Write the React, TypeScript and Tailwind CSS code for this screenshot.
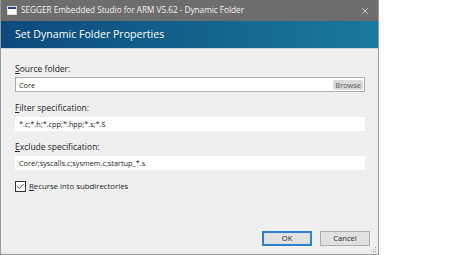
import { Check, X } from 'lucide-react';

function Field({ ul, rest, value, browse }: { ul: string; rest: string; value: string; browse?: boolean }) {
    return (
        <div className="flex flex-col">
            <div className="h-[14px] text-[8.5px] leading-[14px] text-[#1e1e1e]">
                <span className="underline underline-offset-1">{ul}</span>{rest}
            </div>
            <div
                className={
                    browse
                        ? 'mt-[1px] h-[15px] flex items-center bg-white border border-[#adadad] pl-[3px] pr-[1px]'
                        : 'mt-[2px] h-[14px] flex items-center bg-white pl-[4px] pr-[1px]'
                }
            >
                <span className="flex-1 text-[7.3px] leading-[12px] text-[#1a1a1a] whitespace-nowrap">{value}</span>
                {browse && (
                    <span className="h-[10px] px-[2px] rounded-[3px] bg-[#dadada] text-[7.4px] leading-[10px] text-[#555]">Browse</span>
                )}
            </div>
        </div>
    );
}

export default function App() {
    return (
        <div className="w-[450px] h-[255px] bg-white flex" style={{ fontFamily: '"Open Sans", "Noto Sans", sans-serif' }}>
            <div className="relative w-[379px] h-[255px] flex flex-col bg-[#efefef] border-l border-r border-b border-[#9a9a9a]">
                {/* title bar */}
                <div className="h-[21px] bg-[#6d6d6d] flex items-center pl-[6px] pr-[6px]">
                    <div className="w-[10px] h-[9px] border border-[#dcdcdc] bg-white flex flex-col">
                        <div className="h-[2px] bg-[#2a3f9a]" />
                    </div>
                    <span className="ml-[4px] text-[8.2px] text-[#f3f3f3] whitespace-nowrap">
                        SEGGER Embedded Studio for ARM V5.62 - Dynamic Folder
                    </span>
                    <div className="flex-1" />
                    <X size={10} strokeWidth={1.5} className="text-white mr-[2px]" />
                </div>
                {/* header */}
                <div className="h-[27px] bg-gradient-to-r from-[#0d4a7c] to-[#1a7a9b] flex items-center pl-[14px]">
                    <span className="text-[10.6px] text-white leading-none">Set Dynamic Folder Properties</span>
                </div>
                <div className="h-[1px] bg-[#c9d7e0]" />
                {/* body */}
                <div className="flex-1 flex flex-col pl-[14px] pr-[13px] pt-[13px]">
                    <div className="flex flex-col gap-[9px]">
                        <Field ul="S" rest="ource folder:" value="Core" browse />
                        <Field ul="F" rest="ilter specification:" value="*.c;*.h;*.cpp;*.hpp;*.s;*.S" />
                        <Field ul="E" rest="xclude specification:" value="Core/;syscalls.c;sysmem.c;startup_*.s" />
                    </div>
                    <div className="mt-[11px] flex items-center gap-[3px]">
                        <div className="w-[11px] h-[11px] border border-[#333] bg-white flex items-center justify-center">
                            <Check size={9} strokeWidth={2} className="text-[#222]" />
                        </div>
                        <span className="text-[7.8px] text-[#1e1e1e]">
                            <span className="underline underline-offset-1">R</span>ecurse into subdirectories
                        </span>
                    </div>
                    <div className="flex-1" />
                    <div className="flex justify-end gap-[8px] mb-[8px] mr-[-5px]">
                        <button className="w-[50px] h-[15px] bg-[#e1e1e1] border-2 border-[#2f7fd4] text-[7.6px] leading-[11px] text-[#1e1e1e]">OK</button>
                        <button className="w-[50px] h-[15px] bg-[#e1e1e1] border border-[#adadad] text-[7.6px] leading-[13px] text-[#1e1e1e]">Cancel</button>
                    </div>
                </div>
                {/* size grip */}
                <svg className="absolute right-[1px] bottom-[1px]" width="6" height="6" viewBox="0 0 6 6">
                    <rect x="4" y="0" width="1" height="1" fill="#a0a0a0" />
                    <rect x="2" y="2" width="1" height="1" fill="#a0a0a0" />
                    <rect x="4" y="2" width="1" height="1" fill="#a0a0a0" />
                    <rect x="0" y="4" width="1" height="1" fill="#a0a0a0" />
                    <rect x="2" y="4" width="1" height="1" fill="#a0a0a0" />
                    <rect x="4" y="4" width="1" height="1" fill="#a0a0a0" />
                </svg>
            </div>
        </div>
    );
}
